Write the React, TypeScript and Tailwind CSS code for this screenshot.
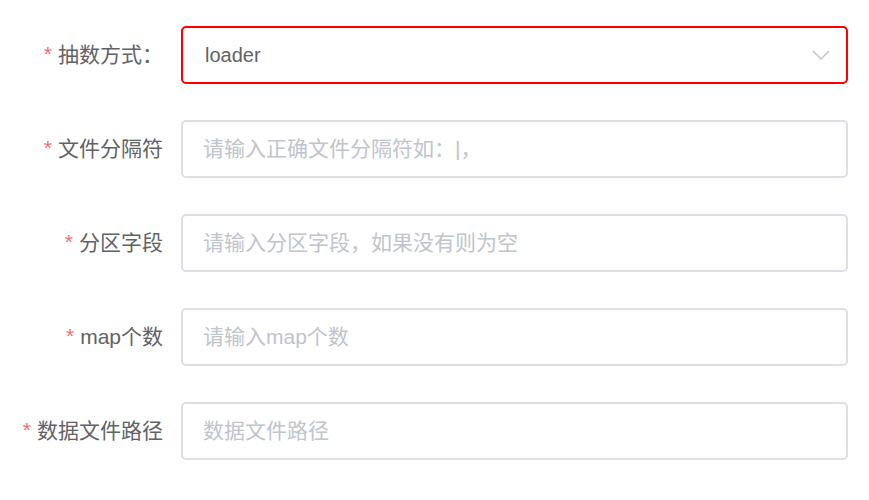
const fields = [
  { label: "抽数方式：", value: "loader", select: true },
  { label: "文件分隔符", placeholder: "请输入正确文件分隔符如：|，" },
  { label: "分区字段", placeholder: "请输入分区字段，如果没有则为空" },
  { label: "map个数", placeholder: "请输入map个数" },
  { label: "数据文件路径", placeholder: "数据文件路径" },
];

export default function App() {
  return (
    <main
      className="min-h-screen w-[869px] bg-white pt-[26px] flex flex-col gap-[36px]"
      style={{ fontFamily: '"Liberation Sans", "Noto Sans CJK SC", sans-serif' }}
    >
      {fields.map((f, i) => (
        <div key={i} className="flex items-center h-[58px]">
          <label className="w-[163px] flex justify-end items-center text-[21px] text-[#606266] whitespace-nowrap">
            <span className="text-[#f56c6c] text-[21px] mr-[6px] leading-none -mt-[4px]">*</span>
            {f.label}
          </label>
          {f.select ? (
            <div className="ml-[18px] w-[667px] h-[58px] rounded-[5px] border-2 border-[#ff0000] flex items-center justify-between pl-[22px] pr-[16px]">
              <span className="text-[20px] text-[#606266]">{f.value}</span>
              <svg width="18" height="10" viewBox="0 0 18 10" fill="none" stroke="#c0c4cc" strokeWidth="1.5">
                <polyline points="1,1 9,9 17,1" />
              </svg>
            </div>
          ) : (
            <input
              readOnly
              placeholder={f.placeholder}
              className="ml-[18px] w-[667px] h-[58px] rounded-[5px] border-2 border-[#dcdfe6] pl-[20px] pr-[22px] text-[21px] text-[#606266] placeholder:text-[#c0c4cc] outline-none"
            />
          )}
        </div>
      ))}
    </main>
  );
}
